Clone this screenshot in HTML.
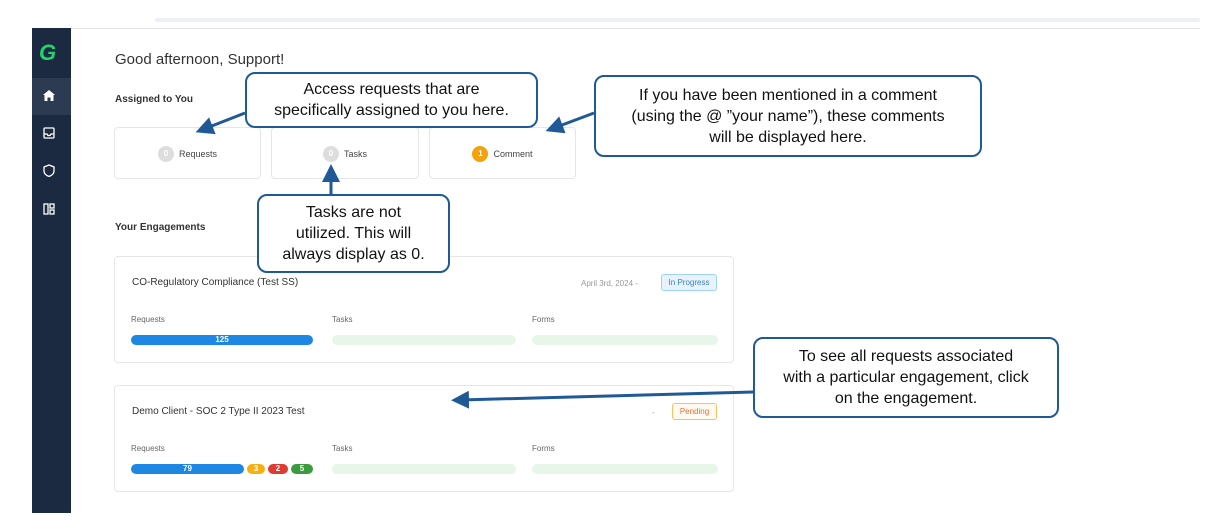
<!DOCTYPE html>
<html><head><style>
*{box-sizing:border-box;margin:0;padding:0}
body{width:1226px;height:521px;background:#fff;font-family:"Liberation Sans",sans-serif;position:relative;overflow:hidden}
.a{position:absolute}
.side{left:32px;top:28px;width:39px;height:485px;background:#1b2a40}
.card{position:absolute;border:1px solid #e6e6e6;border-radius:4px;background:#fff}
.lbl{font-size:8px;color:#666}
.bar{position:absolute;height:10px;border-radius:5px}
.co{position:absolute;border:2px solid #1f5a96;border-radius:10px;background:#fff;font-size:16px;color:#111;text-align:center;line-height:21px;display:flex;align-items:center;justify-content:center}
.num{display:inline-block;width:16px;height:16px;border-radius:8px;font-size:8px;color:#fff;text-align:center;line-height:16px;vertical-align:middle;margin-right:5px;font-weight:bold}
.ct{font-size:9px;color:#444;vertical-align:middle}
</style></head><body>
<div class="a" style="left:155px;top:18px;width:1045px;height:4px;background:#eef0f8;border-radius:3px"></div>
<div class="a" style="left:71px;top:28px;width:1129px;height:1px;background:#e2e2e2"></div>
<div class="a side"></div>
<div class="a" style="left:32px;top:78px;width:39px;height:37px;background:#2c3b52"></div>
<div class="a" style="left:39px;top:40px;font-size:22px;font-weight:bold;font-style:italic;color:#22d36a">G</div>
<svg class="a" style="left:43px;top:90px" width="12" height="11" viewBox="0 0 12 11"><path d="M6 0L0 5h1.5v6h3V7.5h3V11h3V5H12z" fill="#fff"/></svg>
<svg class="a" style="left:43px;top:127px" width="12" height="12" viewBox="0 0 12 12" fill="none" stroke="#fff" stroke-width="1.3"><rect x="1" y="1" width="10" height="10" rx="1"/><path d="M1 7h3l1 1.5h2L8 7h3"/></svg>
<svg class="a" style="left:43px;top:164px" width="12" height="13" viewBox="0 0 12 13" fill="none" stroke="#fff" stroke-width="1.3"><path d="M6 1L1 3v4c0 3 2.5 4.5 5 5.5 2.5-1 5-2.5 5-5.5V3z"/></svg>
<svg class="a" style="left:43px;top:203px" width="12" height="12" viewBox="0 0 12 12" fill="none" stroke="#fff" stroke-width="1.3"><rect x="1" y="1" width="4" height="10"/><rect x="7" y="1" width="4" height="4"/><rect x="7" y="7" width="4" height="4"/></svg>

<div class="a" style="left:115px;top:51px;font-size:15px;color:#333">Good afternoon, Support!</div>
<div class="a" style="left:115px;top:94px;font-size:10px;font-weight:bold;color:#333">Assigned to You</div>
<div class="card" style="left:114px;top:127px;width:147px;height:52px;text-align:center;padding-top:17px"><span class="num" style="background:#ddd">0</span><span class="ct">Requests</span></div>
<div class="card" style="left:271px;top:127px;width:148px;height:52px;text-align:center;padding-top:17px"><span class="num" style="background:#ddd">0</span><span class="ct">Tasks</span></div>
<div class="card" style="left:429px;top:127px;width:147px;height:52px;text-align:center;padding-top:17px"><span class="num" style="background:#f4a20b">1</span><span class="ct">Comment</span></div>

<div class="a" style="left:115px;top:222px;font-size:10px;font-weight:bold;color:#333">Your Engagements</div>

<div class="card" style="left:114px;top:256px;width:620px;height:107px">
<div class="a" style="left:17px;top:20px;font-size:10px;color:#333">CO-Regulatory Compliance (Test SS)</div>
<div class="a" style="left:466px;top:22px;font-size:8px;color:#999">April 3rd, 2024 -</div>
<div class="a" style="left:546px;top:17px;width:56px;height:17px;border:1px solid #9fd0f5;background:#e6f3fd;border-radius:3px;font-size:8px;color:#3d7fc0;text-align:center;line-height:15px">In Progress</div>
<div class="a lbl" style="left:16px;top:58px">Requests</div><div class="a lbl" style="left:217px;top:58px">Tasks</div><div class="a lbl" style="left:417px;top:58px">Forms</div>
<div class="bar" style="left:16px;top:78px;width:182px;background:#1e86e3;font-size:8px;color:#fff;text-align:center;line-height:10px;font-weight:bold">125</div>
<div class="bar" style="left:217px;top:78px;width:184px;background:#e8f5e9"></div>
<div class="bar" style="left:417px;top:78px;width:186px;background:#e8f5e9"></div>
</div>

<div class="card" style="left:114px;top:385px;width:620px;height:107px">
<div class="a" style="left:17px;top:20px;font-size:10px;color:#333">Demo Client - SOC 2 Type II 2023 Test</div>
<div class="a" style="left:537px;top:22px;font-size:8px;color:#999">-</div>
<div class="a" style="left:557px;top:17px;width:45px;height:17px;border:1px solid #f8c064;background:#fffaf0;border-radius:3px;font-size:8px;color:#e0703a;text-align:center;line-height:15px">Pending</div>
<div class="a lbl" style="left:16px;top:58px">Requests</div><div class="a lbl" style="left:217px;top:58px">Tasks</div><div class="a lbl" style="left:417px;top:58px">Forms</div>
<div class="bar" style="left:16px;top:78px;width:113px;background:#1e86e3;font-size:8px;color:#fff;text-align:center;line-height:10px;font-weight:bold">79</div>
<div class="bar" style="left:132px;top:78px;width:18px;background:#f7b011;font-size:8px;color:#fff;text-align:center;line-height:10px;font-weight:bold">3</div>
<div class="bar" style="left:153px;top:78px;width:20px;background:#e03b31;font-size:8px;color:#fff;text-align:center;line-height:10px;font-weight:bold">2</div>
<div class="bar" style="left:176px;top:78px;width:22px;background:#3b9c3f;font-size:8px;color:#fff;text-align:center;line-height:10px;font-weight:bold">5</div>
<div class="bar" style="left:217px;top:78px;width:184px;background:#e8f5e9"></div>
<div class="bar" style="left:417px;top:78px;width:186px;background:#e8f5e9"></div>
</div>

<svg class="a" style="left:0;top:0" width="1226" height="521">
<defs><marker id="m" markerWidth="6" markerHeight="6" refX="3" refY="3" orient="auto"><path d="M0 0L6 3L0 6z" fill="#1f5a96"/></marker></defs>
<g stroke="#1f5a96" stroke-width="3" marker-end="url(#m)">
<line x1="245" y1="113" x2="204" y2="129"/>
<line x1="594" y1="113" x2="554" y2="128"/>
<line x1="331" y1="194" x2="331" y2="173"/>
<line x1="753" y1="392" x2="460" y2="400"/>
</g></svg>

<div class="co" style="left:245px;top:72px;width:293px;height:56px">Access requests that are<br>specifically assigned to you here.</div>
<div class="co" style="left:594px;top:75px;width:388px;height:82px">If you have been mentioned in a comment<br>(using the @ ”your name”), these comments<br>will be displayed here.</div>
<div class="co" style="left:257px;top:194px;width:193px;height:79px">Tasks are not<br>utilized. This will<br>always display as 0.</div>
<div class="co" style="left:753px;top:337px;width:306px;height:81px">To see all requests associated<br>with a particular engagement, click<br>on the engagement.</div>
</body></html>
